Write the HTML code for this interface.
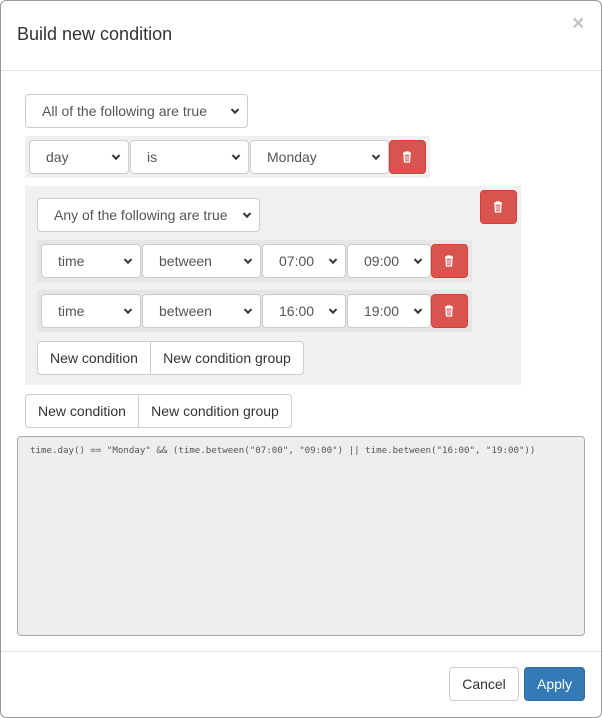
<html><head><style>
body{margin:0;width:602px;height:718px;background:#fff;font-family:"Liberation Sans",sans-serif;font-size:14px;color:#333;position:relative;overflow:hidden}
.a{position:absolute;box-sizing:border-box}
.modal{left:0;top:0;width:602px;height:718px;border:1px solid #999;border-radius:6px}
.sel{border:1px solid #ccc;border-radius:4px;background:#fff;display:flex;align-items:center;padding-left:16px;color:#555}
.sel:after{content:"";position:absolute;right:9px;top:50%;width:4px;height:4px;border-right:2px solid #333;border-bottom:2px solid #333;transform:translateY(-70%) rotate(45deg)}
.tr{background:#d9534f;border:1px solid #d43f3a;border-radius:4px}
.btn{border:1px solid #ccc;background:#fff;display:flex;align-items:center;justify-content:center;color:#333}
</style></head><body>
<div class="a modal"></div>
<div class="a" style="left:17px;top:24px;font-size:18px">Build new condition</div>
<div class="a" style="left:572px;top:12px;font-size:21px;font-weight:bold;color:#c4c4c4">×</div>
<div class="a" style="left:1px;top:70px;width:600px;height:1px;background:#e5e5e5"></div>

<div class="a sel" style="left:25px;top:94px;width:223px;height:34px">All of the following are true</div>

<div class="a" style="left:25px;top:136px;width:405px;height:42px;background:#f0f0f0"></div>
<div class="a sel" style="left:29px;top:140px;width:100px;height:34px">day</div>
<div class="a sel" style="left:130px;top:140px;width:119px;height:34px">is</div>
<div class="a sel" style="left:250px;top:140px;width:139px;height:34px">Monday</div>
<div class="a tr" style="left:389px;top:140px;width:37px;height:34px"></div>

<div class="a" style="left:25px;top:186px;width:496px;height:199px;background:#f0f0f0"></div>
<div class="a tr" style="left:480px;top:190px;width:37px;height:34px"></div>
<div class="a sel" style="left:37px;top:198px;width:223px;height:34px">Any of the following are true</div>

<div class="a" style="left:37px;top:240px;width:435px;height:42px;background:#e6e6e6"></div>
<div class="a sel" style="left:41px;top:244px;width:100px;height:34px">time</div>
<div class="a sel" style="left:142px;top:244px;width:119px;height:34px">between</div>
<div class="a sel" style="left:262px;top:244px;width:84px;height:34px">07:00</div>
<div class="a sel" style="left:347px;top:244px;width:84px;height:34px">09:00</div>
<div class="a tr" style="left:431px;top:244px;width:37px;height:34px"></div>

<div class="a" style="left:37px;top:290px;width:435px;height:42px;background:#e6e6e6"></div>
<div class="a sel" style="left:41px;top:294px;width:100px;height:34px">time</div>
<div class="a sel" style="left:142px;top:294px;width:119px;height:34px">between</div>
<div class="a sel" style="left:262px;top:294px;width:84px;height:34px">16:00</div>
<div class="a sel" style="left:347px;top:294px;width:84px;height:34px">19:00</div>
<div class="a tr" style="left:431px;top:294px;width:37px;height:34px"></div>

<div class="a btn" style="left:37px;top:341px;width:114px;height:34px;border-radius:4px 0 0 4px">New condition</div>
<div class="a btn" style="left:150px;top:341px;width:154px;height:34px;border-radius:0 4px 4px 0">New condition group</div>
<div class="a btn" style="left:25px;top:394px;width:114px;height:34px;border-radius:4px 0 0 4px">New condition</div>
<div class="a btn" style="left:138px;top:394px;width:154px;height:34px;border-radius:0 4px 4px 0">New condition group</div>

<div class="a" style="left:17px;top:436px;width:568px;height:200px;background:#eee;border:1px solid #aaa;border-radius:4px;font-family:'DejaVu Sans Mono','Liberation Mono',monospace;font-size:9.15px;padding:9px 12px;color:#555;white-space:pre">time.day() == "Monday" &amp;&amp; (time.between("07:00", "09:00") || time.between("16:00", "19:00"))</div>

<div class="a" style="left:1px;top:651px;width:600px;height:1px;background:#e5e5e5"></div>
<div class="a btn" style="left:449px;top:667px;width:70px;height:34px;border-radius:4px">Cancel</div>
<div class="a btn" style="left:524px;top:667px;width:61px;height:34px;border-radius:4px;background:#337ab7;border-color:#2e6da4;color:#fff">Apply</div>

<svg width="0" height="0" style="position:absolute"><defs><symbol id="t" viewBox="0 0 10 12"><path d="M1 2h8M3.5 2V1h3v1M2 3h6l-.5 8h-5z" fill="none" stroke="#fff" stroke-width="1.3"/><path d="M4 4.5v5M6 4.5v5" stroke="#fff" stroke-width="1"/></symbol></defs></svg>
<svg class="a" style="left:402px;top:151px" width="10" height="12"><use href="#t"/></svg>
<svg class="a" style="left:493px;top:201px" width="10" height="12"><use href="#t"/></svg>
<svg class="a" style="left:444px;top:255px" width="10" height="12"><use href="#t"/></svg>
<svg class="a" style="left:444px;top:305px" width="10" height="12"><use href="#t"/></svg>
</body></html>
